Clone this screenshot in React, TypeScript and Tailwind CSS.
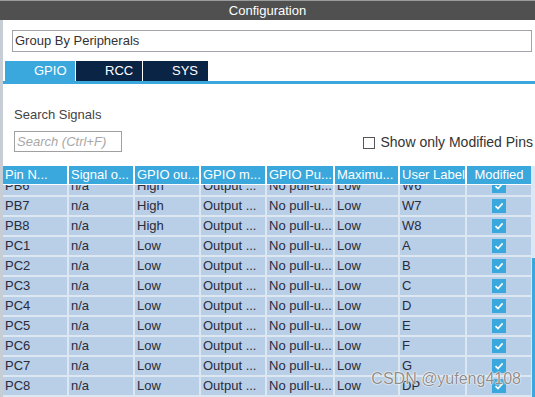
import React from 'react';

const rows = [
  ['PB6', 'n/a', 'High', 'Output ...', 'No pull-u...', 'Low', 'W6'],
  ['PB7', 'n/a', 'High', 'Output ...', 'No pull-u...', 'Low', 'W7'],
  ['PB8', 'n/a', 'High', 'Output ...', 'No pull-u...', 'Low', 'W8'],
  ['PC1', 'n/a', 'Low', 'Output ...', 'No pull-u...', 'Low', 'A'],
  ['PC2', 'n/a', 'Low', 'Output ...', 'No pull-u...', 'Low', 'B'],
  ['PC3', 'n/a', 'Low', 'Output ...', 'No pull-u...', 'Low', 'C'],
  ['PC4', 'n/a', 'Low', 'Output ...', 'No pull-u...', 'Low', 'D'],
  ['PC5', 'n/a', 'Low', 'Output ...', 'No pull-u...', 'Low', 'E'],
  ['PC6', 'n/a', 'Low', 'Output ...', 'No pull-u...', 'Low', 'F'],
  ['PC7', 'n/a', 'Low', 'Output ...', 'No pull-u...', 'Low', 'G'],
  ['PC8', 'n/a', 'Low', 'Output ...', 'No pull-u...', 'Low', 'DP'],
];

const headers = ['Pin N...', 'Signal o...', 'GPIO ou...', 'GPIO m...', 'GPIO Pu...', 'Maximu...', 'User Label', 'Modified'];

const cols = 'grid-cols-[64px_64px_64px_64px_66px_63px_65px_64px]';

function Check() {
  return (
    <div className="w-[14px] h-[14px] bg-[#3aa8dc] flex items-center justify-center">
      <svg width="10" height="10" viewBox="0 0 10 10">
        <path d="M1.5 5.2 L4 7.6 L8.6 2.4" stroke="white" strokeWidth="1.6" fill="none" />
      </svg>
    </div>
  );
}

export default function App() {
  return (
    <div className="relative w-[535px] h-[397px] overflow-hidden bg-white flex flex-col font-['Liberation_Sans',Arial,sans-serif] text-[13px]">
      {/* title bar */}
      <div className="h-[20px] shrink-0 bg-[#4f504f] border-t border-[#9a9c9c] text-white text-[13px] flex items-center justify-center">
        Configuration
      </div>

      <div className="flex flex-1 min-h-0">
        <div className="w-[3px] shrink-0 bg-[#c6cdd4]" />
        <div className="flex-1 flex flex-col min-w-0">
          {/* group by */}
          <div className="pt-[10px] pl-[9px]">
            <div className="w-[520px] h-[22px] border border-[#a0a4a8] flex items-center px-[2px] text-[#333]">
              Group By Peripherals
            </div>
          </div>

          {/* tabs */}
          <div className="mt-[9px] flex pl-[2px] h-[20px]">
            <div className="w-[70px] bg-[#3aa8dc] text-white pl-[29px] leading-[20px]">GPIO</div>
            <div className="w-[1px]" />
            <div className="w-[66px] bg-[#0a2446] text-white pl-[29px] leading-[20px]">RCC</div>
            <div className="w-[1px]" />
            <div className="w-[65px] bg-[#0a2446] text-white pl-[29px] leading-[20px]">SYS</div>
          </div>
          <div className="h-[3px] bg-[#3aa8dc]" />

          {/* search */}
          <div className="mt-[23px] pl-[11px] text-[#444] leading-[16px]">Search Signals</div>
          <div className="mt-[8px] flex items-start pl-[11px]">
            <div className="w-[108px] h-[21px] border border-[#a0a0a0] flex items-center px-[2px] italic text-[#a8a8a8]">
              Search (Ctrl+F)
            </div>
            <div className="ml-auto mr-[2px] mt-[1px] flex items-center gap-[5px] text-[#333] text-[14px]">
              <div className="w-[12px] h-[12px] border border-[#555]" />
              <span>Show only Modified Pins</span>
            </div>
          </div>

          {/* table */}
          <div className="mt-[13px] flex flex-1 min-h-0">
            <div className="flex flex-col">
              <div className={`grid ${cols} gap-x-[2px] h-[19px] bg-white`}>
                {headers.map((h, i) => (
                  <div
                    key={h}
                    className={`h-[18px] bg-[#3aa8dc] text-white leading-[18px] ${i === 7 ? 'text-center' : 'pl-[2px]'} whitespace-nowrap overflow-hidden`}
                  >
                    {h}
                  </div>
                ))}
              </div>
              <div className="flex-1 overflow-hidden bg-[#dde7f1]">
                <div className="-mt-[8px] flex flex-col gap-y-[2px]">
                  {rows.map((r) => (
                    <div key={r[0]} className={`grid ${cols} gap-x-[2px]`}>
                      {r.map((c, i) => (
                        <div key={i} className="h-[18px] bg-[#b8cfe7] text-[#2b2b3b] leading-[18px] pl-[2px] whitespace-nowrap overflow-hidden">
                          {c}
                        </div>
                      ))}
                      <div className="h-[18px] bg-[#b8cfe7] flex items-center justify-center">
                        <Check />
                      </div>
                    </div>
                  ))}
                </div>
              </div>
            </div>
            {/* scrollbar */}
            <div className="flex-1 flex flex-col bg-[#dbe7f3]">
              <div className="h-[92px]" />
              <div className="flex-1 ml-[1px] bg-[#3aa8dc]" />
            </div>
          </div>
        </div>
      </div>

      <div className="absolute right-[14px] bottom-[6px] text-[16px] text-[#8e8e8e] [text-shadow:0_0_2px_white,0_0_1px_white,0_0_1px_white]">
        CSDN @yufeng4108
      </div>
    </div>
  );
}
